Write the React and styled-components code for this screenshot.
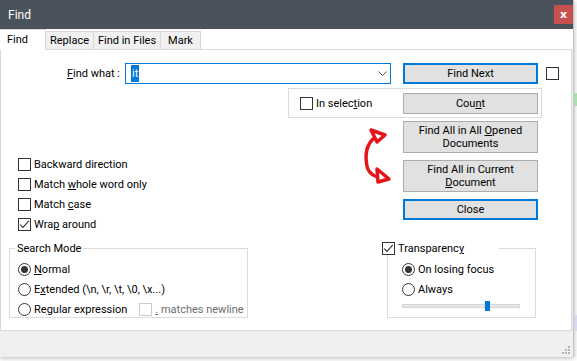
import React from "react";
import styled, { createGlobalStyle } from "styled-components";

const GlobalStyle = createGlobalStyle`
  html, body { margin: 0; padding: 0; background: #fff; }
  body { font-family: Roboto, "Liberation Sans", sans-serif; font-size: 11px; color: #000; }
  * { box-sizing: border-box; }
`;

const Page = styled.div`
  display: flex;
  width: 577px;
  height: 361px;
  overflow: hidden;
  background: #fff;
`;

const Window = styled.div`
  width: 574px;
  height: 357px;
  flex: none;
  display: flex;
  flex-direction: column;
  background: #f0f0f0;
  border-right: 1px solid #c4c4c4;
  box-shadow: 0 1px 5px rgba(0, 0, 0, 0.3);
`;

const OutsideStrip = styled.div`
  width: 3px;
  display: flex;
  flex-direction: column;
`;

const OutsideMark = styled.div`
  height: ${(p) => p.$h}px;
  margin-top: ${(p) => p.$top}px;
  background: ${(p) => p.$color};
`;

const TitleBar = styled.div`
  height: 29px;
  flex: none;
  display: flex;
  align-items: center;
  justify-content: space-between;
  background: #4a535b;
  color: #fff;
  font-size: 12px;
  padding-left: 8px;
`;

const CloseBox = styled.div`
  width: 19px;
  height: 19px;
  background: #c75050;
  color: #fff;
  display: flex;
  align-items: center;
  justify-content: center;
  font-size: 11px;
  font-weight: bold;
  font-family: "DejaVu Sans", sans-serif;
`;

const TabStrip = styled.div`
  height: 20px;
  flex: none;
  display: flex;
  align-items: flex-end;
  background: #fff;
`;

const Tab = styled.div`
  position: relative;
  z-index: ${(p) => (p.$active ? 1 : 0)};
  width: ${(p) => p.$w}px;
  height: ${(p) => (p.$active ? 21 : 18)}px;
  margin-bottom: ${(p) => (p.$active ? -1 : 0)}px;
  padding-right: ${(p) => (p.$active ? 10 : 0)}px;
  padding-bottom: ${(p) => (p.$active ? 2 : 0)}px;
  display: flex;
  align-items: center;
  justify-content: center;
  background: ${(p) => (p.$active ? "#fff" : "#f0f0f0")};
  border-top: 1px solid #d9d9d9;
  border-right: 1px solid #d9d9d9;
`;

const Panel = styled.div`
  position: relative;
  width: 572px;
  height: 282px;
  flex: none;
  background: #fff;
  border: 1px solid #d9d9d9;
  display: flex;
  flex-direction: column;
`;

const StatusBar = styled.div`
  flex: 1;
  display: flex;
  justify-content: flex-end;
  align-items: flex-end;
  padding: 0 3px 3px 0;
`;

const FindRow = styled.div`
  margin-top: 12px;
  height: 22px;
  display: flex;
  align-items: center;
`;

const FieldLabel = styled.div`
  width: 119px;
  text-align: right;
`;

const U = styled.span`
  text-decoration: underline;
  text-underline-offset: 1px;
`;

const Text = styled.span`
  white-space: nowrap;
`;

const ComboInput = styled.div`
  width: 266px;
  height: 21px;
  margin-left: 5px;
  border: 1px solid #0078d7;
  display: flex;
  align-items: center;
  justify-content: space-between;
  padding: 0 3px 0 5px;
`;

const Selected = styled.span`
  background: #0078d7;
  color: #fff;
  padding: 1px 1px;
  line-height: 15px;
`;

const Button = styled.div`
  width: 135px;
  height: ${(p) => p.$h || 21}px;
  margin-left: ${(p) => p.$ml || 0}px;
  flex: none;
  display: flex;
  align-items: center;
  justify-content: center;
  background: #e1e1e1;
  border: ${(p) => (p.$primary ? "2px solid #0078d7" : "1px solid #adadad")};
`;

const ButtonText = styled.span`
  text-align: center;
  line-height: 13px;
`;

const CheckBox = styled.span`
  width: 13px;
  height: 13px;
  flex: none;
  display: flex;
  align-items: center;
  justify-content: center;
  background: #fff;
  border: 1px solid ${(p) => (p.$disabled ? "#cccccc" : "#333")};
  margin-left: ${(p) => p.$ml || 0}px;
`;

const RadioCircle = styled.span`
  width: 13px;
  height: 13px;
  flex: none;
  border-radius: 50%;
  border: 1px solid #333;
  background: #fff;
  display: flex;
  align-items: center;
  justify-content: center;
  &::after {
    content: "";
    display: ${(p) => (p.$on ? "block" : "none")};
    width: 7px;
    height: 7px;
    border-radius: 50%;
    background: #333;
  }
`;

const Option = styled.div`
  height: 13px;
  display: flex;
  align-items: center;
  gap: 3px;
  color: ${(p) => (p.$disabled ? "#6d6d6d" : "#000")};
  margin-left: ${(p) => p.$ml || 0}px;
`;

const SelectionGroup = styled.div`
  margin: 4px 0 0 287px;
  width: 254px;
  height: 30px;
  border: 1px solid #dcdcdc;
  display: flex;
  align-items: center;
  padding-left: 11px;
`;

const SelectionCheck = styled(Option)`
  width: 103px;
`;

const Middle = styled.div`
  margin-top: 3px;
  display: grid;
  grid-template-columns: 402px 135px;
`;

const OptionList = styled.div`
  display: flex;
  flex-direction: column;
  gap: 7px;
  padding: ${(p) => p.$pt || 0}px 0 0 ${(p) => p.$pl || 0}px;
`;

const ButtonColumn = styled.div`
  display: flex;
  flex-direction: column;
  gap: 7px;
`;

const Bottom = styled.div`
  margin-top: 11px;
  display: flex;
  align-items: flex-start;
`;

const GroupBox = styled.div`
  width: ${(p) => p.$w}px;
  height: 70px;
  margin: 6px 0 0 ${(p) => p.$ml}px;
  border: 1px solid #dcdcdc;
  display: flex;
  flex-direction: column;
  align-items: flex-start;
`;

const Legend = styled.div`
  height: 13px;
  margin: -7px 0 0 ${(p) => p.$ml}px;
  width: ${(p) => (p.$w ? `${p.$w}px` : "auto")};
  padding: 0 2px;
  background: #fff;
  display: flex;
  align-items: center;
  gap: 3px;
`;

const SliderTrack = styled.div`
  position: relative;
  width: 118px;
  height: 4px;
  margin: 8px 0 0 14px;
  background: #e7e7e7;
  border: 1px solid #d6d6d6;
`;

const SliderThumb = styled.div`
  position: absolute;
  top: -4px;
  width: 5px;
  height: 10px;
  background: #0078d7;
`;

const Annotation = styled.svg`
  position: absolute;
  left: 359px;
  top: 75px;
`;

const Tick = () => (
  <svg width="11" height="11" viewBox="0 0 11 11">
    <path d="M1.2 5.6 L4 8.4 L9.8 1.8" fill="none" stroke="#333" strokeWidth="1.1" />
  </svg>
);

const Check = ({ checked, disabled, ml }) => (
  <CheckBox $disabled={disabled} $ml={ml}>
    {checked && <Tick />}
  </CheckBox>
);

const tabs = [
  { label: "Find", w: 46, active: true },
  { label: "Replace", w: 48 },
  { label: "Find in Files", w: 67 },
  { label: "Mark", w: 40 },
];

const sliderValue = 0.7;

export default function App() {
  return (
    <Page>
      <GlobalStyle />
      <Window>
        <TitleBar>
          Find
          <CloseBox>x</CloseBox>
        </TitleBar>
        <TabStrip>
          {tabs.map((t) => (
            <Tab key={t.label} $w={t.w} $active={t.active}>
              {t.label}
            </Tab>
          ))}
        </TabStrip>
        <Panel>
          <FindRow>
            <FieldLabel>
              <U>F</U>ind what :
            </FieldLabel>
            <ComboInput>
              <Selected>it</Selected>
              <svg width="9" height="5" viewBox="0 0 9 5">
                <path d="M0.5 0.5 L4.5 4.5 L8.5 0.5" fill="none" stroke="#555" strokeWidth="1" />
              </svg>
            </ComboInput>
            <Button $primary $ml={12}>
              <ButtonText>Find Next</ButtonText>
            </Button>
            <Check ml={8} />
          </FindRow>

          <SelectionGroup>
            <SelectionCheck>
              <Check />
              <Text>In selec<U>t</U>ion</Text>
            </SelectionCheck>
            <Button>
              <ButtonText>Cou<U>n</U>t</ButtonText>
            </Button>
          </SelectionGroup>

          <Middle>
            <OptionList $pt={37} $pl={17}>
              <Option><Check /><Text>Backward direction</Text></Option>
              <Option><Check /><Text>Match <U>w</U>hole word only</Text></Option>
              <Option><Check /><Text>Match <U>c</U>ase</Text></Option>
              <Option><Check checked /><Text>Wra<U>p</U> around</Text></Option>
            </OptionList>
            <ButtonColumn>
              <Button $h={32}>
                <ButtonText>
                  Find All in All <U>O</U>pened
                  <br />
                  Documents
                </ButtonText>
              </Button>
              <Button $h={32}>
                <ButtonText>
                  Find All in Current
                  <br />
                  <U>D</U>ocument
                </ButtonText>
              </Button>
              <Button $primary>
                <ButtonText>Close</ButtonText>
              </Button>
            </ButtonColumn>
          </Middle>

          <Bottom>
            <GroupBox $w={239} $ml={8}>
              <Legend $ml={5}><Text>Search Mode</Text></Legend>
              <OptionList $pt={8} $pl={8}>
                <Option><RadioCircle $on /><Text><U>N</U>ormal</Text></Option>
                <Option><RadioCircle /><Text>E<U>x</U>tended (\n, \r, \t, \0, \x...)</Text></Option>
                <Option>
                  <RadioCircle />
                  <Text>Re<U>g</U>ular expression</Text>
                  <Option $disabled $ml={9}>
                    <CheckBox $disabled />
                    <Text><U>.</U> matches newline</Text>
                  </Option>
                </Option>
              </OptionList>
            </GroupBox>
            <GroupBox $w={149} $ml={139}>
              <Legend $ml={-8} $w={119}>
                <Check checked />
                <Text>Transparenc<U>y</U></Text>
              </Legend>
              <OptionList $pt={8} $pl={14}>
                <Option><RadioCircle $on /><Text>On losing focus</Text></Option>
                <Option><RadioCircle /><Text>Always</Text></Option>
              </OptionList>
              <SliderTrack>
                <SliderThumb style={{ left: `${Math.round(sliderValue * 118) - 1}px` }} />
              </SliderTrack>
            </GroupBox>
          </Bottom>

          <Annotation width="36" height="62" viewBox="0 0 36 62">
            <g fill="none" stroke="#e3151b" strokeWidth="3.5" strokeLinecap="round" strokeLinejoin="round">
              <path d="M11 5 L25 10 L17 17 Z" />
              <path d="M13 14 C 6 21, 5 31, 7 41 C 8 47, 12 50, 17 52" />
              <path d="M17 44 L29 54 L18 57 Z" />
            </g>
          </Annotation>
        </Panel>
        <StatusBar>
          <svg width="8" height="8" viewBox="0 0 8 8" fill="#b5b5b5">
            <rect x="6" y="0" width="2" height="2" />
            <rect x="3" y="3" width="2" height="2" />
            <rect x="6" y="3" width="2" height="2" />
            <rect x="0" y="6" width="2" height="2" />
            <rect x="3" y="6" width="2" height="2" />
            <rect x="6" y="6" width="2" height="2" />
          </svg>
        </StatusBar>
      </Window>
      <OutsideStrip>
        <OutsideMark $top={93} $h={13} $color="#a8e0a8" />
        <OutsideMark $top={209} $h={16} $color="#d8d8f0" />
      </OutsideStrip>
    </Page>
  );
}
